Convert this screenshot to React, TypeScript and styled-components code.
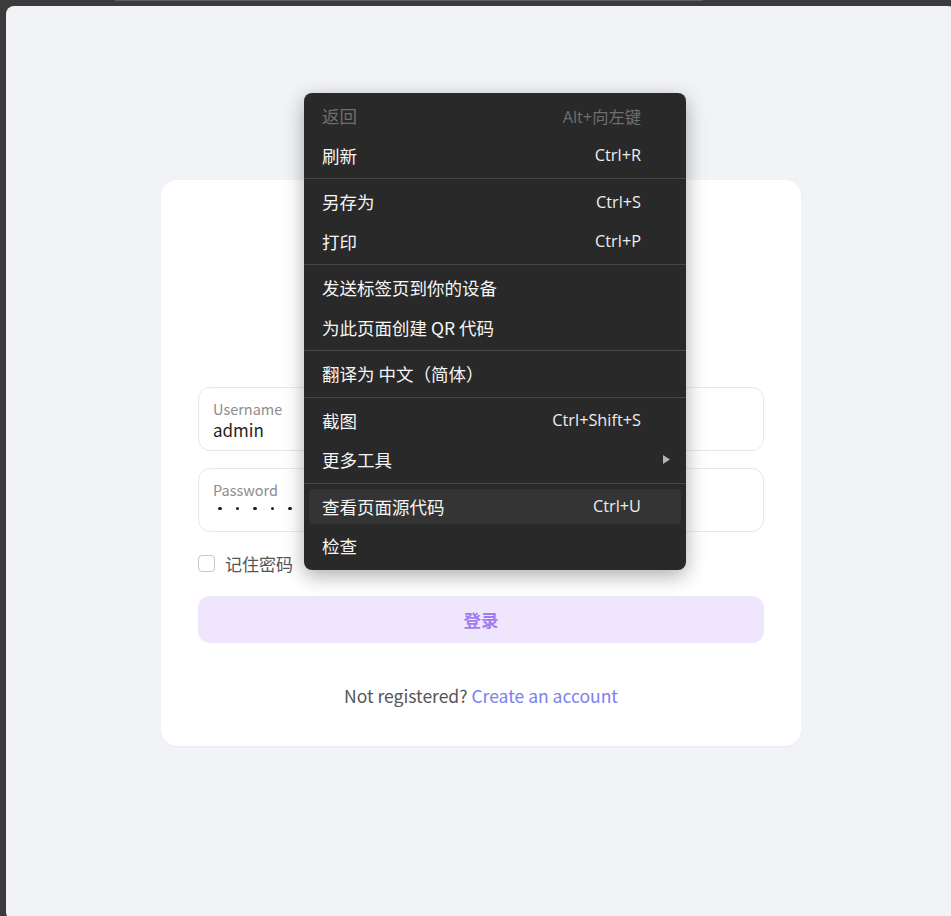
import styled, { createGlobalStyle } from "styled-components";

const GlobalStyle = createGlobalStyle`
  html, body {
    margin: 0;
    padding: 0;
    background: #3b3b3b;
    overflow: hidden;
  }
  body {
    font-family: "Noto Sans CJK SC", "Noto Sans", sans-serif;
  }
`;

const Frame = styled.div`
  position: relative;
  width: 951px;
  height: 916px;
  background: #3b3b3b;
  display: flex;
  flex-direction: column;
  overflow: hidden;
`;

const TopBar = styled.div`
  flex: none;
  height: 6px;
  padding-left: 115px;
`;

const TabLine = styled.div`
  width: 588px;
  height: 1px;
  background: #5e5e5e;
`;

const Viewport = styled.div`
  flex: none;
  margin-left: 6px;
  width: 950px;
  height: 914px;
  background: #f2f3f7;
  border-radius: 8px;
  display: flex;
  align-items: center;
  justify-content: center;
`;

const Card = styled.form`
  width: 640px;
  box-sizing: border-box;
  padding: 207px 37px 37px;
  background: #fff;
  border-radius: 16px;
  box-shadow: 0 1px 2px rgba(20, 20, 40, 0.04);
  display: flex;
  flex-direction: column;
`;

const Fields = styled.div`
  display: flex;
  flex-direction: column;
  gap: 17px;
`;

const Field = styled.label`
  display: flex;
  flex-direction: column;
  height: 64px;
  box-sizing: border-box;
  padding: 11px 14px 9px;
  border: 1px solid #e7e7f0;
  border-radius: 12px;
`;

const FieldLabel = styled.span`
  font-size: 14.5px;
  line-height: 19px;
  color: #8c8c8c;
`;

const FieldValue = styled.span`
  font-size: 17px;
  line-height: 23px;
  color: #1f1f1f;
`;

const Dots = styled.span`
  display: flex;
  align-items: center;
  gap: 14px;
  height: 23px;
  padding-left: 5px;
  margin-top: -2px;
`;

const Dot = styled.i`
  width: 3.5px;
  height: 3.5px;
  border-radius: 50%;
  background: #1f1f1f;
`;

const Remember = styled.label`
  display: flex;
  align-items: center;
  gap: 10px;
  margin-top: 23px;
  height: 17px;
  font-size: 17px;
  color: #555;
`;

const Box = styled.span`
  width: 17px;
  height: 17px;
  box-sizing: border-box;
  border: 1.5px solid #c6c6c6;
  border-radius: 4px;
  background: #fff;
`;

const SubmitButton = styled.button`
  margin-top: 24px;
  height: 47px;
  border: none;
  border-radius: 12px;
  background: #efe6fd;
  color: #a27bf0;
  font-family: "Noto Sans CJK SC", sans-serif;
  font-size: 17.5px;
  font-weight: 600;
`;

const Footer = styled.p`
  margin: 40px 0 0;
  text-align: center;
  font-size: 17.5px;
  line-height: 26px;
  color: #555;
`;

const Link = styled.a`
  color: #7a80f0;
  text-decoration: none;
`;

const Menu = styled.div`
  position: absolute;
  left: 304px;
  top: 93px;
  width: 382px;
  box-sizing: border-box;
  padding: 3px 0 4px;
  background: #292929;
  border-radius: 8px;
  box-shadow: 0 6px 20px rgba(0, 0, 0, 0.32);
`;

const Item = styled.div`
  height: 39.5px;
  box-sizing: border-box;
  padding: 2px 5px;
`;

const ItemBody = styled.div<{ $active?: boolean }>`
  position: relative;
  height: 100%;
  display: flex;
  align-items: center;
  justify-content: space-between;
  padding: 0 40px 0 13px;
  border-radius: 4px;
  background: ${(p) => (p.$active ? "#343434" : "transparent")};
`;

const ItemLabel = styled.span<{ $disabled?: boolean }>`
  font-family: "Noto Sans CJK SC", sans-serif;
  font-size: 17.5px;
  color: ${(p) => (p.$disabled ? "#6f6f6f" : "#f6f6f6")};
`;

const Shortcut = styled.span<{ $disabled?: boolean }>`
  font-family: "Open Sans", "Noto Sans CJK SC", sans-serif;
  font-size: 16.3px;
  color: ${(p) => (p.$disabled ? "#6f6f6f" : "#ededed")};
`;

const Arrow = styled.svg`
  position: absolute;
  right: 11px;
  top: 50%;
  margin-top: -4.5px;
`;

const Separator = styled.div`
  height: 1px;
  margin: 3px 0;
  background: #474747;
`;

type Entry = {
  label: string;
  keys?: string;
  disabled?: boolean;
  active?: boolean;
  submenu?: boolean;
};

const groups: Entry[][] = [
  [
    { label: "返回", keys: "Alt+向左键", disabled: true },
    { label: "刷新", keys: "Ctrl+R" },
  ],
  [
    { label: "另存为", keys: "Ctrl+S" },
    { label: "打印", keys: "Ctrl+P" },
  ],
  [{ label: "发送标签页到你的设备" }, { label: "为此页面创建 QR 代码" }],
  [{ label: "翻译为 中文（简体）" }],
  [
    { label: "截图", keys: "Ctrl+Shift+S" },
    { label: "更多工具", submenu: true },
  ],
  [{ label: "查看页面源代码", keys: "Ctrl+U", active: true }, { label: "检查" }],
];

function ContextMenu() {
  return (
    <Menu>
      {groups.map((group, gi) => (
        <div key={gi}>
          {gi > 0 && <Separator />}
          {group.map((e) => (
            <Item key={e.label}>
              <ItemBody $active={e.active}>
                <ItemLabel $disabled={e.disabled}>{e.label}</ItemLabel>
                {e.keys && <Shortcut $disabled={e.disabled}>{e.keys}</Shortcut>}
                {e.submenu && (
                  <Arrow width="7" height="9" viewBox="0 0 7 9">
                    <polygon points="0,0 7,4.5 0,9" fill="#b3b3b3" />
                  </Arrow>
                )}
              </ItemBody>
            </Item>
          ))}
        </div>
      ))}
    </Menu>
  );
}

function App() {
  return (
    <>
      <GlobalStyle />
      <Frame>
        <TopBar>
          <TabLine />
        </TopBar>
        <Viewport>
          <Card onSubmit={(e) => e.preventDefault()}>
            <Fields>
              <Field>
                <FieldLabel>Username</FieldLabel>
                <FieldValue>admin</FieldValue>
              </Field>
              <Field>
                <FieldLabel>Password</FieldLabel>
                <Dots>
                  {Array.from({ length: 8 }).map((_, i) => (
                    <Dot key={i} />
                  ))}
                </Dots>
              </Field>
            </Fields>
            <Remember>
              <Box />
              记住密码
            </Remember>
            <SubmitButton type="submit">登录</SubmitButton>
            <Footer>
              Not registered? <Link href="#">Create an account</Link>
            </Footer>
          </Card>
        </Viewport>
        <ContextMenu />
      </Frame>
    </>
  );
}

export default App;
